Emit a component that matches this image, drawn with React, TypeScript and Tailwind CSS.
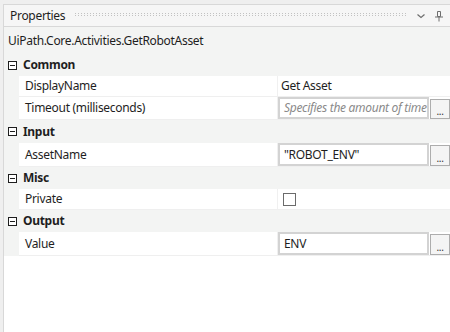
import React from "react";

const font = { fontFamily: '"Noto Sans", "Liberation Sans", sans-serif' };

function MinusBox() {
  return (
    <svg width="9" height="9" viewBox="0 0 9 9" className="shrink-0">
      <rect x="0.5" y="0.5" width="8" height="8" fill="#fff" stroke="#1e1e1e" />
      <path d="M2 4.5h5" stroke="#1e1e1e" />
    </svg>
  );
}

function Header({ label, h }: { label: string; h: string }) {
  return (
    <div className={`flex items-center gap-[6px] pl-[4px] ${h}`}>
      <MinusBox />
      <span className="font-bold text-[12px] text-[#1e1e1e]">{label}</span>
    </div>
  );
}

function Row({ name, h, children }: { name: string; h: string; children: React.ReactNode }) {
  return (
    <div className={`ml-[15px] flex bg-white border-b border-[#efefef] ${h}`}>
      <div className="w-[259px] shrink-0 flex items-center pl-[6px] text-[12px] text-[#1e1e1e] border-r border-[#f0f0f0]">
        {name}
      </div>
      <div className="flex-1 min-w-0 flex items-stretch">{children}</div>
    </div>
  );
}

function TextBox({ value, placeholder }: { value?: string; placeholder?: string }) {
  return (
    <div className="flex flex-1 min-w-0 items-stretch">
      <div className="flex-1 min-w-0 flex items-center border-2 border-[#d3d3d3] pl-[4px] overflow-hidden whitespace-nowrap text-[12px] bg-white">
        {value ? (
          <span className="text-[#1e1e1e]">{value}</span>
        ) : (
          <span className="italic text-[#8a8a8a]">{placeholder}</span>
        )}
      </div>
      <div className="w-[20px] shrink-0 ml-[1px] mt-[2px] border border-[#adadad] bg-[#f4f4f4] flex items-end justify-center text-[10px] leading-[12px] text-[#333] pb-[1px]">
        ...
      </div>
    </div>
  );
}

export default function App() {
  return (
    <div className="w-[450px] h-[332px] bg-[#efefef] pt-[4px] pl-[3px] overflow-hidden tracking-[-0.3px]" style={font}>
      <div className="h-full bg-white border-t border-l border-[#d8d8d8] flex flex-col">
        {/* title bar */}
        <div className="h-[22px] flex items-center bg-[#f6f6f6] border-b border-[#d8d8d8] pl-[6px] pr-[6px]">
          <span className="text-[12px] text-[#1e1e1e]">Properties</span>
          <svg className="ml-[10px] flex-1 h-[5px]" preserveAspectRatio="none">
            <defs>
              <pattern id="dots" width="3" height="2" patternUnits="userSpaceOnUse">
                <rect x="0" y="0" width="1" height="1" fill="#c2c2c2" />
              </pattern>
            </defs>
            <rect width="100%" height="4" fill="url(#dots)" />
          </svg>
          <svg width="10" height="8" viewBox="0 0 10 8" className="ml-[8px]">
            <path d="M1.5 2.5l3.5 3 3.5-3" fill="none" stroke="#6e6e6e" strokeWidth="1.2" />
          </svg>
          <svg width="10" height="12" viewBox="0 0 10 12" className="ml-[8px]">
            <path d="M3.5 1.5h3v5h-3z" fill="none" stroke="#6e6e6e" />
            <path d="M1 7h8M5 7v4.5" stroke="#6e6e6e" />
          </svg>
        </div>
        {/* grid */}
        <div className="bg-[#f3f4f3]">
          <div className="h-[27px] pl-[4px] pt-[5px] text-[12px] text-[#1e1e1e]">
            UiPath.Core.Activities.GetRobotAsset
          </div>
          <Header label="Common" h="h-[22px]" />
          <Row name="DisplayName" h="h-[21px]">
            <div className="flex items-center pl-[3px] text-[12px] text-[#1e1e1e]">Get Asset</div>
          </Row>
          <Row name="Timeout (milliseconds)" h="h-[23px]">
            <TextBox placeholder="Specifies the amount of time" />
          </Row>
          <Header label="Input" h="h-[23px]" />
          <Row name="AssetName" h="h-[24px]">
            <TextBox value={'"ROBOT_ENV"'} />
          </Row>
          <Header label="Misc" h="h-[22px]" />
          <Row name="Private" h="h-[21px]">
            <div className="flex items-center pl-[5px]">
              <div className="w-[13px] h-[13px] border border-[#6b6b6b] bg-white" />
            </div>
          </Row>
          <Header label="Output" h="h-[22px]" />
          <Row name="Value" h="h-[24px]">
            <TextBox value="ENV" />
          </Row>
        </div>
        <div className="flex-1 bg-white" />
      </div>
    </div>
  );
}
